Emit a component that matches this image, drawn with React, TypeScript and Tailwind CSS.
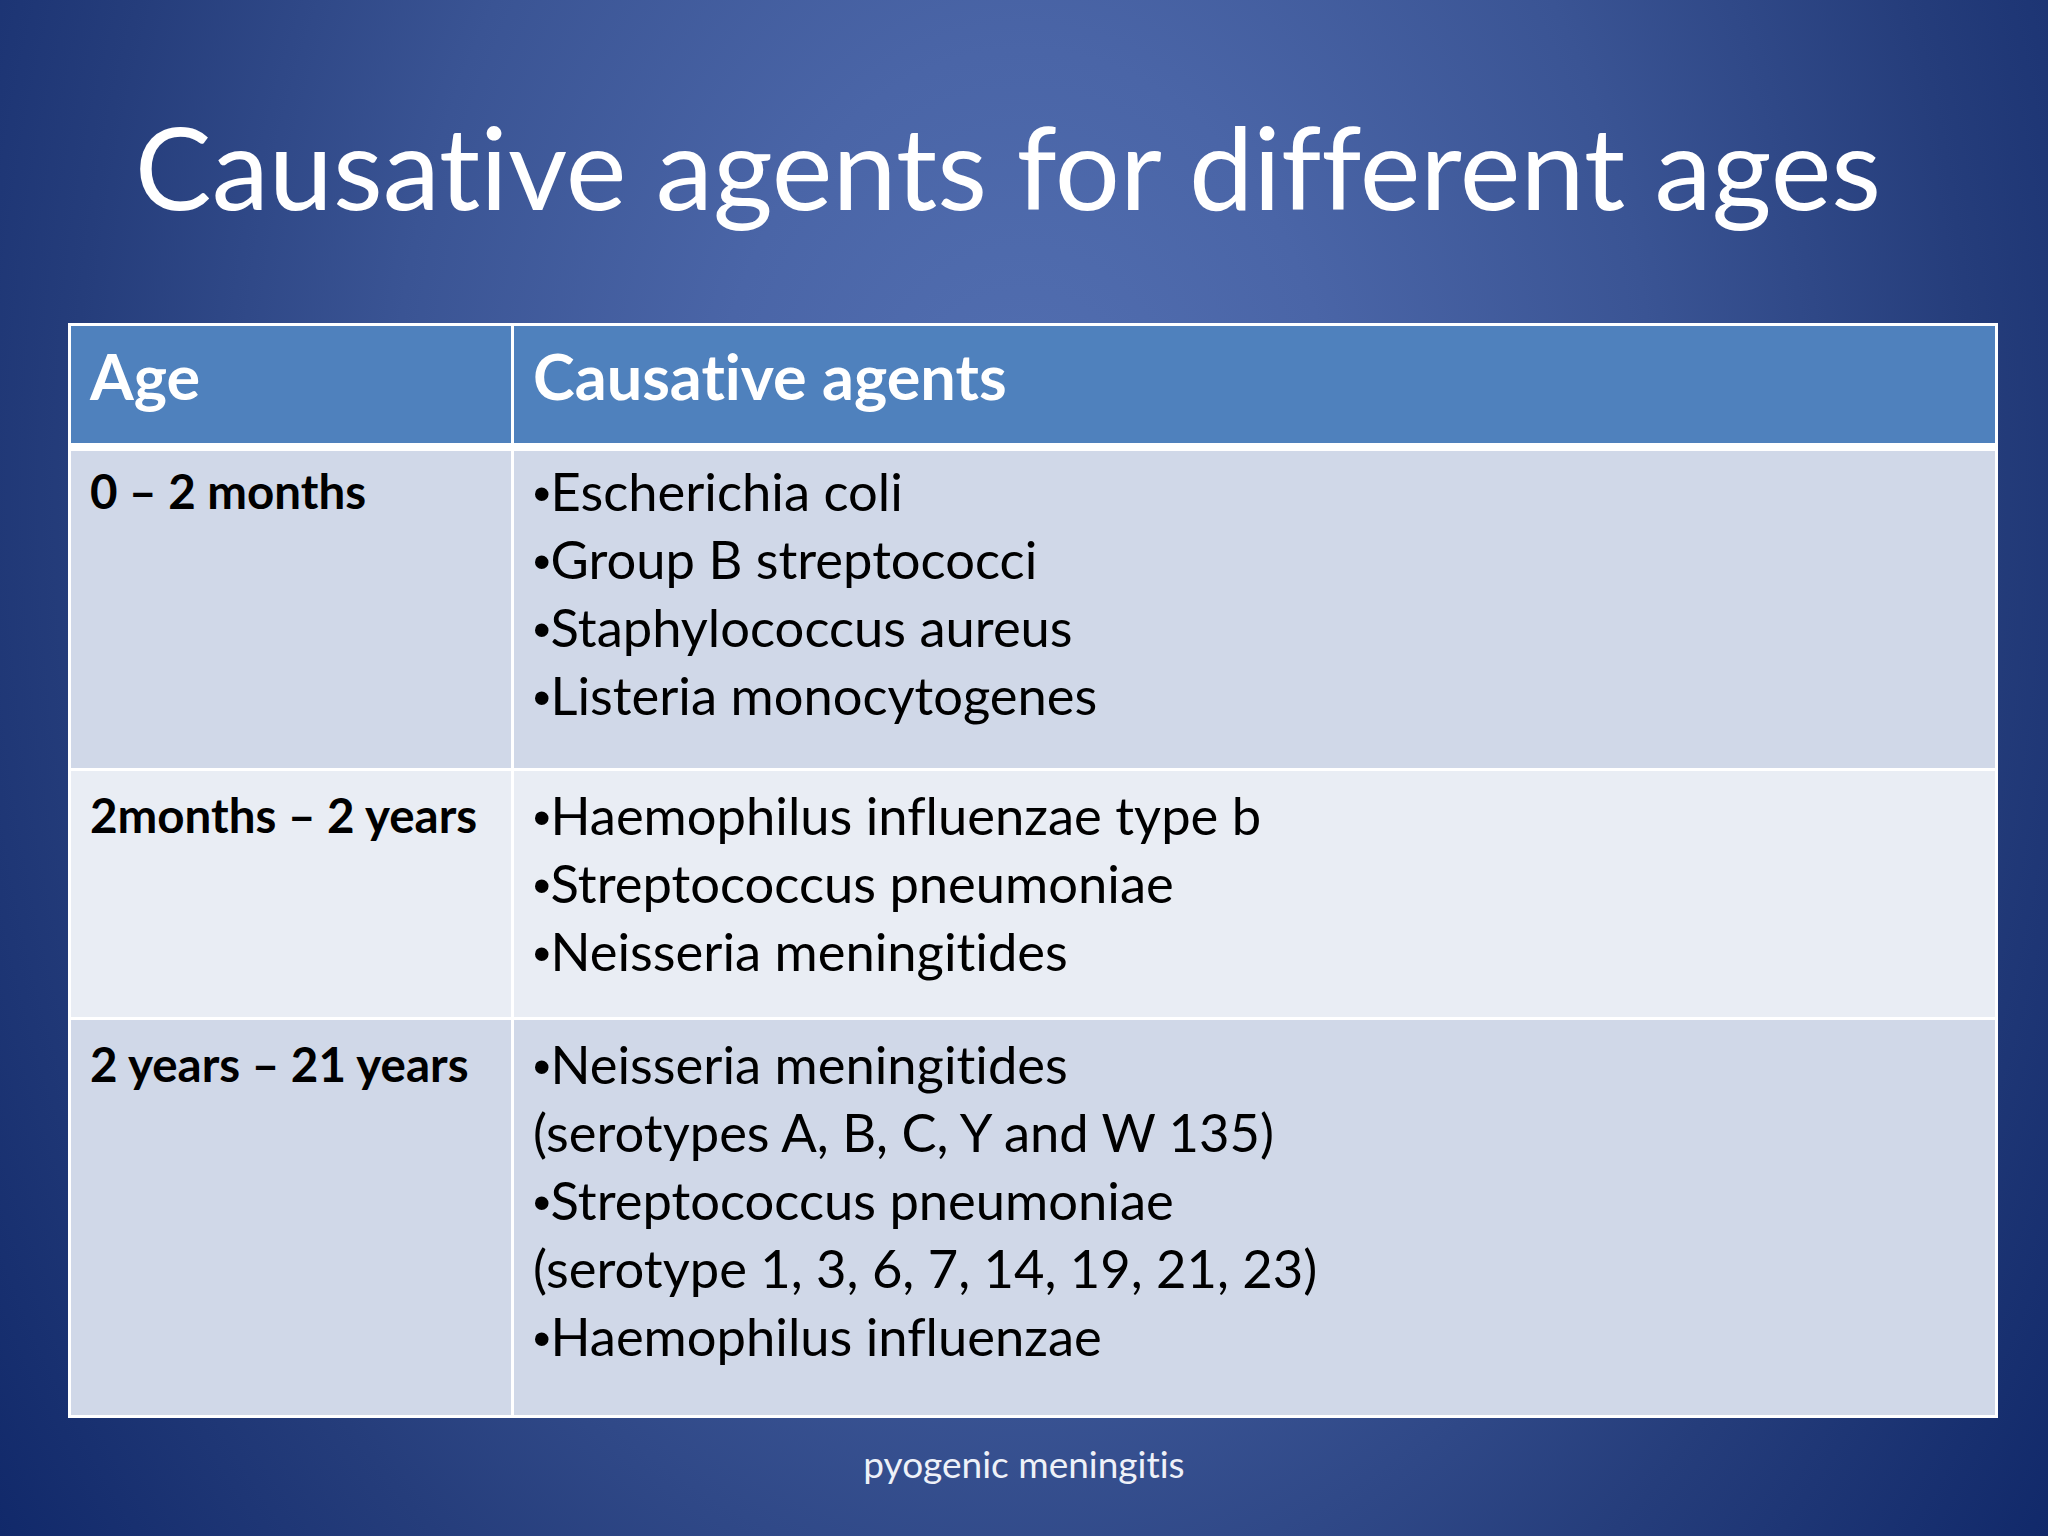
import React from "react";

type Line = { b: boolean; t: string };

const L = (s: string): Line =>
  s.startsWith("•") ? { b: true, t: s.slice(1) } : { b: false, t: s };

const rows = [
  {
    age: "0 – 2 months",
    bg: "bg-[#d0d8e8]",
    h: "h-[317px]",
    pt: "pt-[6px]",
    lines: [
      "•Escherichia coli",
      "•Group B streptococci",
      "•Staphylococcus aureus",
      "•Listeria monocytogenes",
    ],
  },
  {
    age: "2months – 2 years",
    bg: "bg-[#e9edf4]",
    h: "h-[246px]",
    pt: "pt-[10px]",
    lines: [
      "•Haemophilus influenzae type b",
      "•Streptococcus pneumoniae",
      "•Neisseria meningitides",
    ],
  },
  {
    age: "2 years – 21 years",
    bg: "bg-[#d0d8e8]",
    h: "h-[395px]",
    pt: "pt-[10px]",
    lines: [
      "•Neisseria meningitides",
      "(serotypes A, B, C, Y and W 135)",
      "•Streptococcus pneumoniae",
      "(serotype 1, 3, 6, 7, 14, 19, 21, 23)",
      "•Haemophilus influenzae",
    ],
  },
];

export default function App() {
  return (
    <div className="w-[2048px] h-[1536px] overflow-hidden font-['Lato',_'Open_Sans',_sans-serif] [font-variant-ligatures:none]">
      <div className="w-full h-[1536px] flex flex-col items-center bg-[radial-gradient(ellipse_62%_115%_at_50%_32%,#5370b2_0%,#4a65a7_25%,#3a5494_50%,#253d7b_75%,#11296a_100%)]">
        <h1 className="pt-[108px] pr-[32px] text-[115px] leading-none font-normal text-white">
          Causative agents for different ages
        </h1>
        <div className="mt-[100px] w-[1930px] self-start ml-[68px] bg-white p-[3px] flex flex-col">
          <div className="grid grid-cols-[440px_1fr] gap-x-[3px] h-[117px]">
            <div className="bg-[#4f81bd] pl-[19px] pt-[16px] text-[63px] leading-[68px] font-bold text-white">
              Age
            </div>
            <div className="bg-[#4f81bd] pl-[19px] pt-[16px] text-[63px] leading-[68px] font-bold text-white">
              Causative agents
            </div>
          </div>
          <div className="h-[8px]" />
          {rows.map((r, i) => (
            <React.Fragment key={i}>
              {i > 0 && <div className="h-[3px]" />}
              <div className={`grid grid-cols-[440px_1fr] gap-x-[3px] ${r.h}`}>
                <div className={`${r.bg} pl-[19px] ${r.pt} text-[47.5px] leading-[68px] font-bold text-black whitespace-nowrap`}>
                  {r.age}
                </div>
                <div className={`${r.bg} pl-[19px] ${r.pt} text-[52.5px] leading-[68px] text-black`}>
                  {r.lines.map((s, j) => {
                    const l = L(s);
                    return (
                      <div key={j} className="whitespace-nowrap h-[68px]">
                        {l.b && (
                          <span className="font-['Liberation_Sans',_sans-serif] text-[50px] leading-[0]">•</span>
                        )}
                        {l.t}
                      </div>
                    );
                  })}
                </div>
              </div>
            </React.Fragment>
          ))}
        </div>
        <div className="mt-[27px] text-[37px] leading-none text-[#eef1f8]">
          pyogenic meningitis
        </div>
      </div>
    </div>
  );
}
